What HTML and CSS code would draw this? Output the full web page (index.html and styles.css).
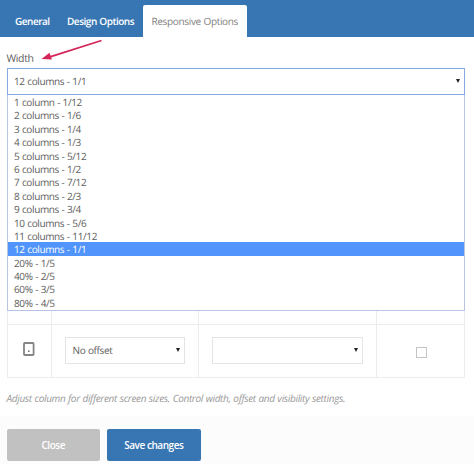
FILE: index.html
```html
<!DOCTYPE html>
<html lang="en">
<head>
<meta charset="utf-8">
<title>Column settings</title>
<link rel="stylesheet" href="styles.css">
</head>
<body>
<nav class="tabs">
  <a class="tab general">General</a>
  <a class="tab design">Design Options</a>
  <a class="tab active">Responsive Options</a>
</nav>
<main class="panel">
  <div class="label"><span>Width</span>
    <svg class="pointer" width="64" height="24" viewBox="0 0 64 24"><path d="M60.5 3.5L9 19.8" stroke="#d4265a" stroke-width="1.8" fill="none"/><path d="M0.5 22L8.5 15.8L11 22.6Z" fill="#d4265a"/></svg>
  </div>
  <div class="select wide"><span>12 columns - 1/1</span><i class="caret"></i></div>
  <ul class="options">
    <li>1 column - 1/12</li>
    <li>2 columns - 1/6</li>
    <li>3 columns - 1/4</li>
    <li>4 columns - 1/3</li>
    <li>5 columns - 5/12</li>
    <li>6 columns - 1/2</li>
    <li>7 columns - 7/12</li>
    <li>8 columns - 2/3</li>
    <li>9 columns - 3/4</li>
    <li>10 columns - 5/6</li>
    <li>11 columns - 11/12</li>
    <li class="selected">12 columns - 1/1</li>
    <li>20% - 1/5</li>
    <li>40% - 2/5</li>
    <li>60% - 3/5</li>
    <li>80% - 4/5</li>
  </ul>
  <div class="grid">
    <div class="cell stub"></div><div class="cell stub"></div><div class="cell stub"></div><div class="cell stub"></div>
    <div class="cell device"><svg width="12" height="14" viewBox="0 0 12 14"><rect x="1" y="1" width="9.6" height="12" rx="0.8" fill="none" stroke="#858585" stroke-width="1.8"/><rect x="5" y="8.4" width="1.6" height="1.6" fill="#777"/></svg></div>
    <div class="cell"><div class="select"><span>No offset</span><i class="caret"></i></div></div>
    <div class="cell"><div class="select"><span></span><i class="caret"></i></div></div>
    <div class="cell check"><i class="box"></i></div>
  </div>
  <p class="hint">Adjust column for different screen sizes. Control width, offset and visibility settings.</p>
</main>
<footer class="footer">
  <button class="btn close">Close</button>
  <button class="btn save">Save changes</button>
</footer>
</body>
</html>
```
FILE: styles.css
```css
* { box-sizing: border-box; }
body {
  margin: 0;
  width: 474px;
  height: 467px;
  overflow: hidden;
  background: #fff;
  font-family: "Open Sans", sans-serif;
  font-size: 10px;
  letter-spacing: -0.38px;
  word-spacing: 0.4px;
  text-rendering: geometricPrecision;
  color: #606060;
}
.tabs {
  display: flex;
  align-items: flex-end;
  height: 37px;
  background: #3876b3;
}
.tab {
  height: 32px;
  line-height: 33px;
  color: #fff;
  font-weight: 600;
  white-space: nowrap;
  letter-spacing: -0.48px;
}
.general { width: 52px; margin-left: 15px; }
.design { width: 75.5px; }
.tab.active {
  width: 104.5px;
  background: #fff;
  color: #808080;
  font-weight: 400;
  letter-spacing: -0.34px;
  text-align: center;
  border-radius: 2px 2px 0 0;
}
.panel { padding: 0 9px 0 6.5px; height: 379px; }
.label {
  position: relative;
  height: 31px;
  padding-top: 12px;
  line-height: 20px;
  font-size: 10.5px;
}
.pointer { position: absolute; left: 34px; top: 0; }
.select {
  display: flex;
  align-items: center;
  justify-content: space-between;
  height: 27px;
  padding: 0 4px 1px 6.5px;
  border: 1px solid #e4e4e4;
}
.select.wide { border-color: #86a9e4; }
.caret {
  border: 2px solid transparent;
  border-top: 4px solid #222;
  border-bottom: 0;
}
.options {
  list-style: none;
  margin: 0;
  padding: 0;
  height: 216px;
  border: 1px solid #b8c4e6;
  border-top: 0;
}
.options li {
  height: 13.4px;
  line-height: 14px;
  padding-left: 6.5px;
}
.options .selected { background: #5194fb; color: #fff; }
.grid {
  display: grid;
  grid-template-columns: 44.5px 146.5px 178px 1fr;
  grid-template-rows: 14px 53px;
  border-left: 1px solid #ececec;
}
.cell {
  padding: 12px 13px 0;
  border-right: 1px solid #ececec;
  border-bottom: 1px solid #ececec;
}
.stub { padding: 0; }
.device, .check { display: flex; align-items: center; justify-content: center; padding: 0; }
.device { padding: 0 0 4px 0; }
.check { padding-left: 2px; }
.box { width: 11px; height: 11px; border: 1px solid #c4c4c4; margin-top: 3px; }
.hint {
  margin: 0;
  padding-top: 10px;
  line-height: 20px;
  font-style: italic;
  letter-spacing: -0.33px;
  color: #999;
  white-space: nowrap;
}
.footer {
  display: flex;
  gap: 7px;
  height: 48px;
  padding: 13px 0 0 6.5px;
  background: #fcfcfc;
}
.btn {
  width: 93.5px;
  height: 32px;
  padding: 0;
  border: 0;
  border-radius: 2px;
  font: 600 10px "Open Sans", sans-serif;
  letter-spacing: -0.45px;
  color: #fff;
}
.close { background: #c1c1c1; }
.save { background: #3876b3; }
```
